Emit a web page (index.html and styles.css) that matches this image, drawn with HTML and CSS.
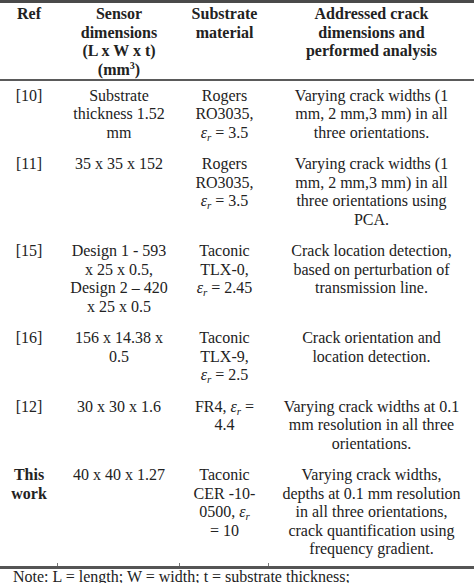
FILE: index.html
```html
<!DOCTYPE html>
<html>
<head>
<meta charset="utf-8">
<link rel="stylesheet" href="styles.css">
</head>
<body>
<div class="page">
<table class="tbl">
  <colgroup>
    <col class="c1"><col class="c2"><col class="c3"><col class="c4">
  </colgroup>
  <thead>
    <tr>
      <th>Ref</th>
      <th>Sensor<br>dimensions<br>(L x W x t)<br>(mm<sup>3</sup>)</th>
      <th>Substrate<br>material</th>
      <th>Addressed crack<br>dimensions and<br>performed analysis</th>
    </tr>
  </thead>
  <tbody>
    <tr>
      <td>[10]</td>
      <td>Substrate<br>thickness 1.52<br>mm</td>
      <td>Rogers<br>RO3035,<br><span class="er"><i>ε</i><sub>r</sub></span> = 3.5</td>
      <td>Varying crack widths (1<br>mm, 2 mm,3 mm) in all<br>three orientations.</td>
    </tr>
    <tr>
      <td>[11]</td>
      <td>35 x 35 x 152</td>
      <td>Rogers<br>RO3035,<br><span class="er"><i>ε</i><sub>r</sub></span> = 3.5</td>
      <td>Varying crack widths (1<br>mm, 2 mm,3 mm) in all<br>three orientations using<br>PCA.</td>
    </tr>
    <tr>
      <td>[15]</td>
      <td>Design 1 - 593<br>x 25 x 0.5,<br>Design 2 – 420<br>x 25 x 0.5</td>
      <td>Taconic<br>TLX-0,<br><span class="er"><i>ε</i><sub>r</sub></span> = 2.45</td>
      <td>Crack location detection,<br>based on perturbation of<br>transmission line.</td>
    </tr>
    <tr>
      <td>[16]</td>
      <td>156 x 14.38 x<br>0.5</td>
      <td>Taconic<br>TLX-9,<br><span class="er"><i>ε</i><sub>r</sub></span> = 2.5</td>
      <td>Crack orientation and<br>location detection.</td>
    </tr>
    <tr>
      <td>[12]</td>
      <td>30 x 30 x 1.6</td>
      <td>FR4, <span class="er"><i>ε</i><sub>r</sub></span> =<br>4.4</td>
      <td>Varying crack widths at 0.1<br>mm resolution in all three<br>orientations.</td>
    </tr>
    <tr class="last">
      <td class="bold">This<br>work</td>
      <td>40 x 40 x 1.27</td>
      <td>Taconic<br>CER -10-<br>0500, <span class="er"><i>ε</i><sub>r</sub></span><br>= 10</td>
      <td>Varying crack widths,<br>depths at 0.1 mm resolution<br>in all three orientations,<br>crack quantification using<br>frequency gradient.</td>
    </tr>
  </tbody>
</table>
<p class="note">Note: L = length; W = width; t = substrate thickness;</p>
</div>
</body>
</html>
```

FILE: styles.css
```css
html, body {
  margin: 0;
  padding: 0;
  background: #ffffff;
}

.page {
  width: 474px;
  font-family: "Liberation Serif", "Times New Roman", serif;
  font-size: 16px;
  line-height: 18.5px;
  color: #222222;
}

.tbl {
  width: 474px;
  border-collapse: collapse;
  table-layout: fixed;
  border-top: 3px solid #4a4a4a;
  border-bottom: 3px solid #555555;
}

.c1 { width: 58px; }
.c2 { width: 122px; }
.c3 { width: 89px; }
.c4 { width: 205px; }

.tbl th {
  font-weight: bold;
  text-align: center;
  vertical-align: top;
  padding: 2px 0 0 0;
  white-space: nowrap;
  border-bottom: 2px solid #5a5a5a;
}

.tbl th sup {
  font-size: 10px;
  line-height: 0;
  vertical-align: 6px;
}

.tbl td {
  text-align: center;
  vertical-align: top;
  padding: 5.5px 0 7.5px 0;
  white-space: nowrap;
}

.tbl td.bold {
  font-weight: bold;
}

.tbl tr.last td {
  position: relative;
}

.tbl tr.last td:not(:last-child)::after {
  content: "";
  position: absolute;
  right: 0;
  bottom: 0;
  width: 1px;
  height: 3px;
  background: #777777;
}

.er i {
  font-style: italic;
}

.er sub {
  font-style: italic;
  font-size: 11px;
  line-height: 0;
  vertical-align: -3px;
}

.note {
  margin: 0;
  padding: 0 0 0 13px;
  line-height: 16px;
  white-space: nowrap;
}
```
